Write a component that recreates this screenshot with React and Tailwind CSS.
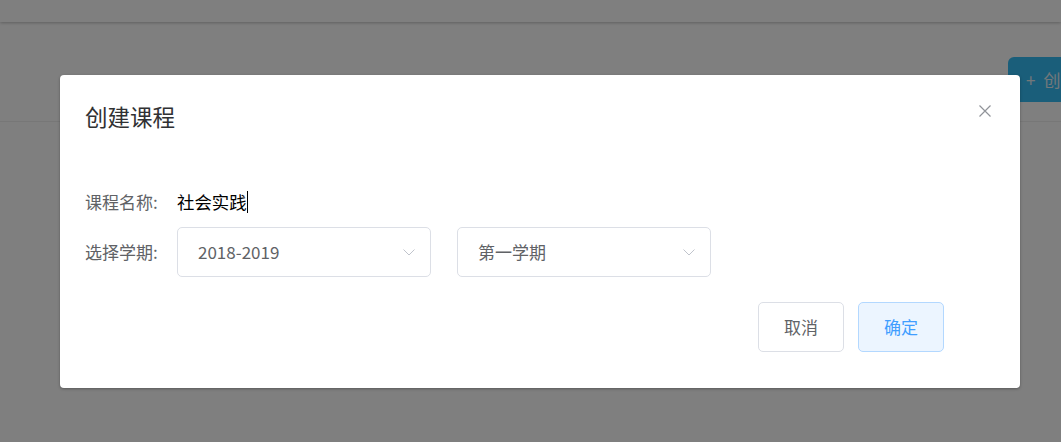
import React from 'react';

const font = { fontFamily: '"Noto Sans CJK SC", "Noto Sans", sans-serif' };

const Chevron = () => (
  <svg width="12" height="7" viewBox="0 0 12 7" fill="none" stroke="#c0c4cc" strokeWidth="1">
    <path d="M0.5 0.5 L6 6 L11.5 0.5" />
  </svg>
);

const CloseIcon = () => (
  <svg width="12" height="12" viewBox="0 0 12 12" fill="none" stroke="#909399" strokeWidth="1.2">
    <path d="M0.5 0.5 L11.5 11.5 M11.5 0.5 L0.5 11.5" />
  </svg>
);

const Select = ({ value }) => (
  <div className="flex h-[50px] w-[254px] items-center justify-between rounded-[5px] border border-[#dcdfe6] bg-white pl-[20px] pr-[15px]">
    <span className="text-[17px] text-[#606266]">{value}</span>
    <Chevron />
  </div>
);

const App = () => {
  return (
    <div className="relative h-[442px] w-full overflow-hidden bg-white" style={font}>
      {/* page beneath the mask */}
      <div className="h-[22px] bg-white shadow-[0_1px_3px_rgba(0,0,0,0.25)]" />
      <div className="flex h-[100px] items-start justify-end border-b border-[#eeeeee]">
        <button className="mr-[-60px] mt-[35px] flex h-[45px] w-[113px] shrink-0 items-center gap-[8px] rounded-l-[6px] bg-[#34bcf4] pl-[18px] text-[17px] text-[#e6f0f4]">
          <span>+</span>
          <span>创建</span>
        </button>
      </div>

      {/* mask */}
      <div className="absolute inset-0 bg-black/50">
        <div className="ml-[60px] mt-[75px] h-[313px] w-[960px] rounded-[4px] bg-white shadow-[0_1px_3px_rgba(0,0,0,0.3)]">
          <div className="flex items-start justify-between pl-[25px] pr-[29px] pt-[26px]">
            <span className="text-[22.5px] leading-[30px] text-[#303133]">创建课程</span>
            <span className="mt-[4px]">
              <CloseIcon />
            </span>
          </div>

          <div className="mt-[46px] pl-[25px]">
            <div className="flex h-[50px] items-center">
              <span className="w-[92px] text-[17px] text-[#606266]">课程名称:</span>
              <span className="text-[17.4px] text-black">社会实践</span>
              <span className="h-[22px] border-l border-black" />
            </div>
            <div className="flex h-[50px] items-center">
              <span className="w-[92px] text-[17px] text-[#606266]">选择学期:</span>
              <div className="flex gap-[26px]">
                <Select value="2018-2019" />
                <Select value="第一学期" />
              </div>
            </div>
          </div>

          <div className="mt-[25px] flex justify-end gap-[14px] pr-[76px]">
            <button className="h-[50px] w-[86px] rounded-[5px] border border-[#dcdfe6] bg-white text-[17px] text-[#606266]">
              取消
            </button>
            <button className="h-[50px] w-[86px] rounded-[5px] border border-[#b3d8ff] bg-[#ecf5ff] text-[17px] text-[#409eff]">
              确定
            </button>
          </div>
        </div>
      </div>
    </div>
  );
};

export default App;
